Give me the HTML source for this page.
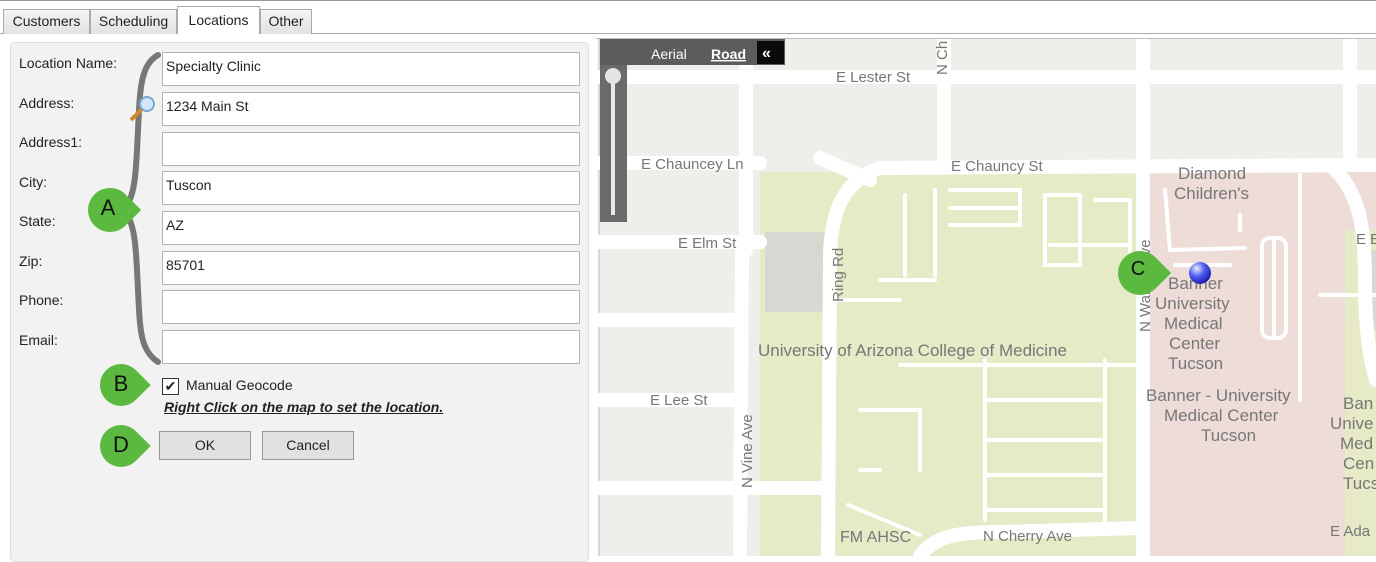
<!DOCTYPE html>
<html><head><meta charset="utf-8"><style>
*{box-sizing:border-box;margin:0;padding:0}
body{width:1376px;height:556px;overflow:hidden;background:#fff;font-family:"Segoe UI","Liberation Sans",sans-serif;font-size:14px;color:#222;position:relative}
.abs{position:absolute}
.tab{position:absolute;top:9px;height:25px;border:1px solid #aaa;border-bottom:none;background:linear-gradient(#f4f4f4,#e2e2e2);font-size:14px;padding:3px 0 0;text-align:center}
.lbl{position:absolute;left:19px;font-size:14px}
.inp{position:absolute;left:162px;width:418px;height:34px;background:#fff;border:1px solid #b4b4b4;padding:5px 3px;font-size:14px}
.btn{position:absolute;top:431px;width:92px;height:29px;border:1px solid #999;background:#e1e1e1;text-align:center;padding-top:5px;font-size:14px}
.mk{position:absolute;width:44px;height:44px;background:#5cb940;border-radius:50% 0 50% 50%;transform:rotate(45deg)}
.mkt{position:absolute;font-size:22px;color:#111;width:44px;text-align:center}
.mt{font-family:"Segoe UI","Liberation Sans",sans-serif;fill:#777}
</style></head><body>
<div class="abs" style="left:0;top:0;width:1376px;height:1px;background:#999"></div>
<div class="abs" style="left:0;top:33px;width:1376px;height:1px;background:#aaa"></div>
<div class="tab" style="left:3px;width:87px">Customers</div>
<div class="tab" style="left:90px;width:87px">Scheduling</div>
<div class="tab" style="left:177px;width:83px;top:6px;height:28px;background:#fff;padding-top:5px">Locations</div>
<div class="tab" style="left:260px;width:52px">Other</div>

<div class="abs" style="left:10px;top:42px;width:579px;height:520px;background:#f2f2f2;border:1px solid #ddd;border-radius:5px"></div>

<div class="lbl" style="top:55px">Location Name:</div>
<div class="lbl" style="top:95px">Address:</div>
<div class="lbl" style="top:134px">Address1:</div>
<div class="lbl" style="top:174px">City:</div>
<div class="lbl" style="top:213px">State:</div>
<div class="lbl" style="top:253px">Zip:</div>
<div class="lbl" style="top:292px">Phone:</div>
<div class="lbl" style="top:332px">Email:</div>

<div class="inp" style="top:52px">Specialty Clinic</div>
<div class="inp" style="top:92px">1234 Main St</div>
<div class="inp" style="top:132px"></div>
<div class="inp" style="top:171px">Tuscon</div>
<div class="inp" style="top:211px">AZ</div>
<div class="inp" style="top:251px">85701</div>
<div class="inp" style="top:290px"></div>
<div class="inp" style="top:330px"></div>

<svg class="abs" style="left:0;top:0" width="600" height="556">
<path d="M158,55 C140,65 140,90 138,130 C136,170 136,195 124,210 C136,225 136,250 138,290 C140,330 140,350 158,362" fill="none" stroke="#777" stroke-width="6" stroke-linecap="round"/>
<line x1="131" y1="120" x2="142" y2="109" stroke="#d08a2a" stroke-width="4"/>
<circle cx="147" cy="104" r="7" fill="#cfe6fa" stroke="#7aa6d0" stroke-width="2"/>
</svg>

<div class="mk" style="left:88px;top:188px"></div><div class="mkt" style="left:86px;top:195px">A</div>
<div class="mk" style="left:100px;top:364px;width:42px;height:42px"></div><div class="mkt" style="left:99px;top:371px">B</div>
<div class="mk" style="left:100px;top:425px;width:42px;height:42px"></div><div class="mkt" style="left:99px;top:432px">D</div>

<div class="abs" style="left:162px;top:378px;width:17px;height:17px;border:1px solid #333;background:#fff;font-size:14px;line-height:15px;text-align:center">✔</div>
<div class="abs" style="left:186px;top:377px">Manual Geocode</div>
<div class="abs" style="left:164px;top:399px;font-weight:bold;font-style:italic;text-decoration:underline;font-size:14px">Right Click on the map to set the location.</div>
<div class="btn" style="left:159px">OK</div>
<div class="btn" style="left:262px">Cancel</div>

<div class="abs" style="left:596px;top:38px;width:780px;height:1px;background:#bbb"></div>
<svg class="abs" style="left:598px;top:39px" width="778" height="517" viewBox="598 39 778 517">
<rect x="598" y="39" width="778" height="517" fill="#efeeeb"/>
<rect x="598" y="39" width="2" height="517" fill="#d8d8d8"/>
<rect x="760" y="172" width="385" height="384" fill="#e6eac6"/>
<rect x="1150" y="172" width="226" height="384" fill="#eedcd9"/>
<rect x="1345" y="230" width="31" height="326" fill="#e6eac6"/>
<rect x="1362" y="250" width="14" height="80" fill="#d8d8d4"/>
<rect x="765" y="232" width="60" height="80" fill="#d9d7d2"/>
<g stroke="#fff" fill="none" stroke-linecap="round">
<g stroke-width="14">
<line x1="598" y1="77" x2="1376" y2="77"/>
<line x1="598" y1="163" x2="760" y2="163"/>
<line x1="598" y1="242" x2="760" y2="242"/>
<line x1="598" y1="320" x2="740" y2="320"/>
<line x1="598" y1="400" x2="740" y2="400"/>
<line x1="598" y1="488" x2="825" y2="488"/>
<line x1="746" y1="39" x2="746" y2="250"/>
<line x1="742" y1="250" x2="740" y2="556"/>
<line x1="944" y1="39" x2="944" y2="165"/>
<line x1="1143" y1="39" x2="1143" y2="556"/>
<line x1="1350" y1="39" x2="1350" y2="160"/>
<path d="M820,158 L870,180"/>
<path d="M1376,165 L880,168 C845,180 830,210 830,260 L828,556"/>
<path d="M1330,165 C1360,190 1365,230 1365,280 C1365,330 1370,360 1376,380"/>
<path d="M920,556 C935,535 960,532 1000,532 L1140,528"/>
</g>
<g stroke-width="4">
<path d="M950,190 L1020,190 L1020,225 L950,225 M950,208 L1020,208"/>
<path d="M905,195 L905,275 M935,190 L935,275 M880,280 L935,280"/>
<path d="M1045,195 L1045,265 L1080,265 L1080,195 Z M1095,200 L1130,200 L1130,265 M1050,245 L1130,245"/>
<path d="M835,300 L900,300 M900,365 L1140,365"/>
<path d="M985,360 L985,520 M985,400 L1105,400 M985,440 L1105,440 M985,475 L1105,475 M985,510 L1105,510 M1105,360 L1105,520"/>
<path d="M860,410 L920,410 L920,470 M860,470 L880,470"/>
<path d="M1165,190 L1170,250 L1245,248 M1175,265 L1230,265 M1240,215 L1240,230"/>
<rect x="1262" y="238" width="24" height="100" rx="8"/>
<path d="M1274,238 L1274,338 M1300,175 L1300,400 M1320,295 L1376,295"/>
<path d="M848,505 L920,535"/>
</g>
</g>
<text class="mt" x="836" y="82" font-size="15">E Lester St</text>
<text class="mt" x="641" y="169" font-size="15">E Chauncey Ln</text>
<text class="mt" x="951" y="171" font-size="15">E Chauncy St</text>
<text class="mt" x="678" y="248" font-size="15">E Elm St</text>
<text class="mt" x="650" y="405" font-size="15">E Lee St</text>
<text class="mt" x="758" y="356" font-size="17">University of Arizona College of Medicine</text>
<text class="mt" x="840" y="542" font-size="16">FM AHSC</text>
<text class="mt" x="983" y="541" font-size="15">N Cherry Ave</text>
<text class="mt" x="1356" y="244" font-size="15">E E</text>
<text class="mt" x="1178" y="179" font-size="17">Diamond</text>
<text class="mt" x="1174" y="199" font-size="17">Children's</text>
<text class="mt" x="1168" y="289" font-size="17">Banner</text>
<text class="mt" x="1155" y="309" font-size="17">University</text>
<text class="mt" x="1164" y="329" font-size="17">Medical</text>
<text class="mt" x="1169" y="349" font-size="17">Center</text>
<text class="mt" x="1168" y="369" font-size="17">Tucson</text>
<text class="mt" x="1146" y="401" font-size="17">Banner - University</text>
<text class="mt" x="1164" y="421" font-size="17">Medical Center</text>
<text class="mt" x="1201" y="441" font-size="17">Tucson</text>
<text class="mt" x="1343" y="409" font-size="17">Ban</text>
<text class="mt" x="1330" y="429" font-size="17">Unive</text>
<text class="mt" x="1340" y="449" font-size="17">Med</text>
<text class="mt" x="1343" y="469" font-size="17">Cen</text>
<text class="mt" x="1343" y="489" font-size="17">Tucs</text>
<text class="mt" x="1330" y="536" font-size="15">E Ada</text>
<text class="mt" font-size="15" transform="translate(752,488) rotate(-90)">N Vine Ave</text>
<text class="mt" font-size="15" transform="translate(843,302) rotate(-90)">Ring Rd</text>
<text class="mt" font-size="15" transform="translate(1150,332) rotate(-90)">N Warren Ave</text>
<text class="mt" font-size="15" transform="translate(947,75) rotate(-90)">N Ch</text>
<defs><radialGradient id="g" cx="0.35" cy="0.3" r="0.7"><stop offset="0" stop-color="#eef"/><stop offset="0.5" stop-color="#5060f0"/><stop offset="1" stop-color="#2020b0"/></radialGradient></defs>
<circle cx="1200" cy="273" r="11" fill="url(#g)"/>
<rect x="600" y="39" width="185" height="26" fill="#5c5c5c"/>
<rect x="600" y="65" width="27" height="157" fill="#6a6a6a"/>
<rect x="611" y="80" width="4" height="135" fill="#e8e8e8"/>
<circle cx="613" cy="76" r="8" fill="#e4e4e4"/>
<rect x="757" y="41" width="27" height="23" fill="#0a0a0a"/>
<text x="762" y="58" fill="#fff" font-size="16" font-weight="bold" font-family="Liberation Sans">«</text>
<text x="651" y="59" fill="#fff" font-size="14" font-family="Segoe UI, Liberation Sans">Aerial</text>
<text x="711" y="59" fill="#fff" font-size="14" font-weight="bold" text-decoration="underline" font-family="Segoe UI, Liberation Sans">Road</text>
</svg>
<div class="mk" style="left:1118px;top:251px"></div><div class="mkt" style="left:1116px;top:258px;font-size:20px">C</div>
</body></html>
